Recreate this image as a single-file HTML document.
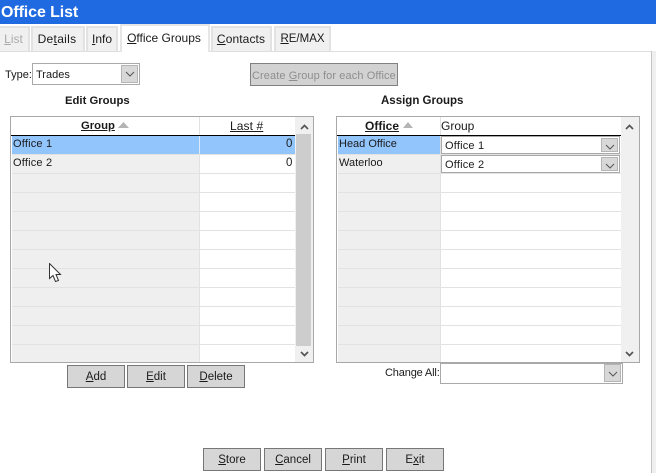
<!DOCTYPE html>
<html><head><meta charset="utf-8"><style>
html,body{margin:0;padding:0;background:#fff;}
#p{position:relative;width:656px;height:473px;overflow:hidden;background:#fff;font:12px "Liberation Sans",Arial,sans-serif;color:#1a1a1a;}
#p div,#p span.a{position:absolute;box-sizing:border-box;}
.t{white-space:nowrap;line-height:14px;}
.tab{background:#f0f0f0;border:2px solid #e2e2e2;border-bottom:0;text-align:center;line-height:22px;color:#1a1a1a;}
.btn{background:#d6d6d6;border:1px solid #777;text-align:center;line-height:22px;height:23px;width:58px;color:#1a1a1a;font-size:11.5px;}
.cmb{background:#fff;border:1px solid #a9a9a9;}
.ar{background:#d8d8d8;border:1px solid #b5b5b5;}
u{text-underline-offset:1px;}
svg{position:absolute;display:block;}
</style></head><body><div id="p">
<div style="left:0;top:0;width:656px;height:24px;background:#1f6ae0;"></div>
<div class="t" style="left:1px;top:4px;font:bold 16px/18px 'Liberation Sans',Arial,sans-serif;color:#fff;letter-spacing:-.1px;">Office List</div>

<div style="left:0;top:51px;width:656px;height:1px;background:#dedede;"></div>
<div style="left:651px;top:51px;width:5px;height:422px;background:#efefef;border-left:1px solid #c4c4c4;"></div>
<div class="tab" style="left:-2px;top:26px;width:32px;height:25px;color:#aaa;padding-right:1px;"><u>L</u>ist</div>
<div class="tab" style="left:31px;top:26px;width:54px;height:25px;letter-spacing:.3px;padding-right:2px;">De<u>t</u>ails</div>
<div class="tab" style="left:86px;top:26px;width:32px;height:25px;"><u>I</u>nfo</div>
<div class="tab" style="left:120px;top:24px;width:90px;height:28px;background:#fff;border-color:#e6e6e6;line-height:24px;padding-right:2px;"><u>O</u>ffice Groups</div>
<div class="tab" style="left:211px;top:26px;width:61px;height:25px;letter-spacing:.1px;padding-right:1px;"><u>C</u>ontacts</div>
<div class="tab" style="left:274px;top:26px;width:57px;height:25px;font-size:11.5px;"><u>R</u>E/MAX</div>

<div class="t" style="left:5px;top:68px;font-size:11px;">Type:</div>
<div class="cmb" style="left:32px;top:63px;width:108px;height:22px;"></div>
<div class="t" style="left:36px;top:68px;font-size:11px;">Trades</div>
<div class="ar" style="left:121px;top:65px;width:17px;height:18px;"></div>
<svg style="left:125px;top:71px" width="10" height="6"><path d="M1 1L5 5L9 1" fill="none" stroke="#555" stroke-width="1"/></svg>

<div style="left:250px;top:63px;width:148px;height:23px;background:#d2d2d2;border:1px solid #808080;"></div>
<div class="t" style="left:252px;top:69px;color:#8e8e8e;font-size:11px;letter-spacing:.1px;">Create <u>G</u>roup for each Office</div>

<div class="t" style="left:65px;top:94px;font-weight:bold;font-size:11.3px;">Edit Groups</div>
<div class="t" style="left:381px;top:94px;font-weight:bold;font-size:11.5px;">Assign Groups</div>

<!-- left grid -->
<div style="left:10px;top:116px;width:304px;height:247px;background:#fff;border:1px solid #a8a8a8;"></div>
<div style="left:12px;top:136px;width:187px;height:226px;background:#efefef;"></div>
<div style="left:199px;top:117px;width:1px;height:245px;background:#e2e2e2;"></div>
<div style="left:11px;top:135px;width:284px;height:1px;background:#000;"></div>
<div style="left:12px;top:136px;width:283px;height:18px;background:#93c5fd;"></div>
<div style="left:199px;top:136px;width:1px;height:18px;background:#dbe9fb;"></div>
<div style="left:12px;top:154px;width:283px;height:1px;background:#e2e2e2;"></div>
<div style="left:12px;top:173px;width:283px;height:1px;background:#e2e2e2;"></div>
<div style="left:12px;top:192px;width:283px;height:1px;background:#e2e2e2;"></div>
<div style="left:12px;top:211px;width:283px;height:1px;background:#e2e2e2;"></div>
<div style="left:12px;top:230px;width:283px;height:1px;background:#e2e2e2;"></div>
<div style="left:12px;top:249px;width:283px;height:1px;background:#e2e2e2;"></div>
<div style="left:12px;top:268px;width:283px;height:1px;background:#e2e2e2;"></div>
<div style="left:12px;top:287px;width:283px;height:1px;background:#e2e2e2;"></div>
<div style="left:12px;top:306px;width:283px;height:1px;background:#e2e2e2;"></div>
<div style="left:12px;top:325px;width:283px;height:1px;background:#e2e2e2;"></div>
<div style="left:12px;top:344px;width:283px;height:1px;background:#e2e2e2;"></div>
<div class="t" style="left:81px;top:119px;font-weight:bold;font-size:11.3px;"><u>Group</u></div>
<svg style="left:118px;top:122px" width="11" height="6"><path d="M0 6L5.5 0L11 6Z" fill="#b4b4b4"/></svg>
<div class="t" style="left:230px;top:119px;letter-spacing:.1px;"><u>Last #</u></div>
<div class="t" style="left:13px;top:137px;font-size:11px;letter-spacing:.2px;">Office 1</div>
<div class="t" style="left:13px;top:156px;font-size:11px;letter-spacing:.2px;">Office 2</div>
<div class="t" style="left:286px;top:137px;font-size:11.5px;">0</div>
<div class="t" style="left:286px;top:156px;font-size:11.5px;">0</div>
<div style="left:295px;top:117px;width:18px;height:245px;background:#f0f0f0;"></div>
<div style="left:296px;top:134px;width:15px;height:212px;background:#cdcdcd;"></div>
<svg style="left:300px;top:124px" width="9" height="6"><path d="M1 5L4.5 1.5L8 5" fill="none" stroke="#555" stroke-width="1.7"/></svg>
<svg style="left:300px;top:351px" width="9" height="6"><path d="M1 1L4.5 4.5L8 1" fill="none" stroke="#555" stroke-width="1.7"/></svg>
<svg style="left:49px;top:263px" width="14" height="20"><path d="M0.5 0.5V15.5L4 12.5L6.5 18.5L9.5 17.5L7 11.5H11.5Z" fill="#fff" stroke="#333" stroke-width="1"/></svg>

<div class="btn" style="left:67px;top:365px;"><u>A</u>dd</div>
<div class="btn" style="left:127px;top:365px;"><u>E</u>dit</div>
<div class="btn" style="left:187px;top:365px;"><u>D</u>elete</div>

<!-- right grid -->
<div style="left:336px;top:116px;width:304px;height:247px;background:#fff;border:1px solid #a8a8a8;"></div>
<div style="left:338px;top:136px;width:102px;height:226px;background:#efefef;"></div>
<div style="left:440px;top:117px;width:1px;height:245px;background:#e2e2e2;"></div>
<div style="left:337px;top:135px;width:284px;height:1px;background:#000;"></div>
<div style="left:338px;top:136px;width:102px;height:18px;background:#93c5fd;"></div>
<div style="left:338px;top:154px;width:283px;height:1px;background:#e2e2e2;"></div>
<div style="left:338px;top:173px;width:283px;height:1px;background:#e2e2e2;"></div>
<div style="left:338px;top:192px;width:283px;height:1px;background:#e2e2e2;"></div>
<div style="left:338px;top:211px;width:283px;height:1px;background:#e2e2e2;"></div>
<div style="left:338px;top:230px;width:283px;height:1px;background:#e2e2e2;"></div>
<div style="left:338px;top:249px;width:283px;height:1px;background:#e2e2e2;"></div>
<div style="left:338px;top:268px;width:283px;height:1px;background:#e2e2e2;"></div>
<div style="left:338px;top:287px;width:283px;height:1px;background:#e2e2e2;"></div>
<div style="left:338px;top:306px;width:283px;height:1px;background:#e2e2e2;"></div>
<div style="left:338px;top:325px;width:283px;height:1px;background:#e2e2e2;"></div>
<div style="left:338px;top:344px;width:283px;height:1px;background:#e2e2e2;"></div>
<div class="t" style="left:365px;top:119px;font-weight:bold;"><u>Office</u></div>
<svg style="left:403px;top:122px" width="10" height="6"><path d="M0 6L5 0L10 6Z" fill="#b4b4b4"/></svg>
<div class="t" style="left:441px;top:119px;">Group</div>
<div class="t" style="left:339px;top:137px;font-size:11px;">Head Office</div>
<div class="t" style="left:339px;top:156px;font-size:11px;">Waterloo</div>

<div class="cmb" style="left:441px;top:136px;width:179px;height:18px;"></div>
<div class="t" style="left:445px;top:139px;font-size:11px;letter-spacing:.2px;">Office 1</div>
<div class="ar" style="left:601px;top:138px;width:17px;height:14px;"></div>
<svg style="left:605px;top:144px" width="10" height="6"><path d="M1 1L5 5L9 1" fill="none" stroke="#555" stroke-width="1"/></svg>
<div class="cmb" style="left:441px;top:155px;width:179px;height:18px;"></div>
<div class="t" style="left:445px;top:158px;font-size:11px;letter-spacing:.2px;">Office 2</div>
<div class="ar" style="left:601px;top:157px;width:17px;height:14px;"></div>
<svg style="left:605px;top:163px" width="10" height="6"><path d="M1 1L5 5L9 1" fill="none" stroke="#555" stroke-width="1"/></svg>

<div style="left:621px;top:117px;width:18px;height:245px;background:#f0f0f0;"></div>
<svg style="left:625px;top:124px" width="9" height="6"><path d="M1 5L4.5 1.5L8 5" fill="none" stroke="#555" stroke-width="1.7"/></svg>
<svg style="left:625px;top:351px" width="9" height="6"><path d="M1 1L4.5 4.5L8 1" fill="none" stroke="#555" stroke-width="1.7"/></svg>

<div class="t" style="left:385px;top:366px;font-size:11px;letter-spacing:-.15px;">Change All:</div>
<div class="cmb" style="left:440px;top:363px;width:183px;height:21px;"></div>
<div class="ar" style="left:604px;top:364px;width:17px;height:18px;"></div>
<svg style="left:608px;top:371px" width="10" height="6"><path d="M1 1L5 5L9 1" fill="none" stroke="#555" stroke-width="1"/></svg>

<div class="btn" style="left:203px;top:448px;"><u>S</u>tore</div>
<div class="btn" style="left:264px;top:448px;"><u>C</u>ancel</div>
<div class="btn" style="left:325px;top:448px;"><u>P</u>rint</div>
<div class="btn" style="left:386px;top:448px;">E<u>x</u>it</div>
</div></body></html>
